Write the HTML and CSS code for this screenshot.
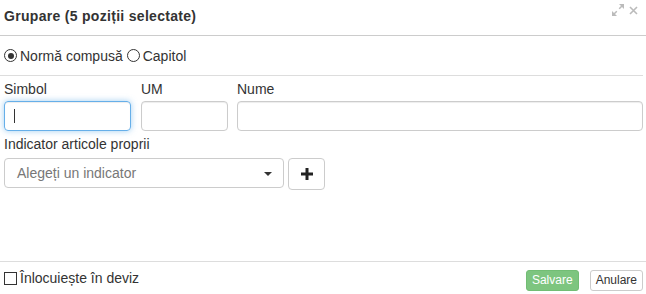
FILE: index.html
```html
<!DOCTYPE html>
<html>
<head>
    <title>Grupare</title>
    <link rel="stylesheet" href="styles.css">
</head>
<body>
    <div class="dialog">
        <div class="dialog-header">
            <span class="dialog-title">Grupare (5 poziții selectate)</span>
            <span class="dialog-tools">
                <svg width="12" height="12" viewBox="0 0 12 12" fill="#bbb" stroke="#bbb" stroke-width="1.5">
                    <path d="M12 0 L7 0 L12 5 Z" stroke="none"/>
                    <path d="M10 2 L7.2 4.8"/>
                    <path d="M0 12 L0 7 L5 12 Z" stroke="none"/>
                    <path d="M2 10 L4.8 7.2"/>
                </svg>
                <svg width="9" height="9" viewBox="0 0 9 9"><path d="M1 1 L8 8 M8 1 L1 8" stroke="#bbb" stroke-width="1.6"/></svg>
            </span>
        </div>

        <div class="dialog-body">
            <div class="type-row">
                <label class="choice"><span class="radio checked"></span>Normă compusă</label>
                <label class="choice"><span class="radio"></span>Capitol</label>
            </div>

            <div class="fields">
                <div class="field field-simbol">
                    <label>Simbol</label>
                    <div class="input focused"><span class="caret"></span></div>
                </div>
                <div class="field field-um">
                    <label>UM</label>
                    <div class="input"></div>
                </div>
                <div class="field field-nume">
                    <label>Nume</label>
                    <div class="input"></div>
                </div>
            </div>

            <div class="field">
                <label>Indicator articole proprii</label>
                <div class="indicator-row">
                    <div class="select">
                        <span>Alegeți un indicator</span>
                        <span class="select-arrow"></span>
                    </div>
                    <button class="btn btn-add">
                        <svg width="12" height="12" viewBox="0 0 12 12"><path d="M0 6 H12 M6 0 V12" stroke="#222" stroke-width="3"/></svg>
                    </button>
                </div>
            </div>
        </div>

        <div class="dialog-footer">
            <label class="choice"><span class="checkbox"></span>Înlocuiește în deviz</label>
            <div class="footer-buttons">
                <button class="btn btn-save">Salvare</button>
                <button class="btn btn-cancel">Anulare</button>
            </div>
        </div>
    </div>
</body>
</html>
```

FILE: styles.css
```css
* { box-sizing: border-box; }
body { margin: 0; font-family: "Liberation Sans", Arial, sans-serif; font-size: 14px; color: #333; background: #fff; }

.dialog { height: 294px; display: flex; flex-direction: column; }

.dialog-header {
    height: 36px;
    padding: 0 4px 3px 4px;
    border-bottom: 1px solid #ccc;
    display: flex;
    align-items: center;
    justify-content: space-between;
}
.dialog-title { font-weight: bold; font-size: 14px; letter-spacing: 0.3px; }
.dialog-tools { display: flex; align-items: center; gap: 5px; align-self: flex-start; margin-top: 4px; margin-right: 4px; }

.dialog-body { padding: 0 3px 0 4px; }

.type-row {
    height: 40px;
    display: flex;
    align-items: center;
    gap: 4px;
    border-bottom: 1px solid #ddd;
    margin: 0 0 0 -4px;
    padding: 0 4px;
}

.choice { display: flex; align-items: center; gap: 3px; }
.radio {
    width: 13px; height: 13px;
    border: 1px solid #333;
    border-radius: 50%;
    display: inline-block;
    position: relative;
}
.radio.checked::after {
    content: "";
    position: absolute;
    left: 2.5px; top: 2.5px;
    width: 6px; height: 6px;
    border-radius: 50%;
    background: #333;
}
.checkbox { width: 13px; height: 13px; border: 1px solid #333; display: inline-block; }

.fields { display: flex; gap: 10px; margin-top: 3px; }
.field label { display: block; height: 20px; line-height: 20px; margin-bottom: 2px; }
.field-simbol { width: 127px; }
.field-um { width: 87px; }
.field-nume { flex: 1; margin-left: -1px; }

.input {
    height: 30px;
    border: 1px solid #ccc;
    border-radius: 4px;
    box-shadow: inset 0 1px 1px rgba(0,0,0,0.075);
    display: flex;
    align-items: center;
    padding-left: 9px;
}
.input.focused {
    border-color: #66afe9;
    box-shadow: inset 0 1px 1px rgba(0,0,0,0.075), 0 0 6px rgba(102,175,233,0.6);
}
.caret { width: 1px; height: 14px; background: #333; }

.fields + .field { margin-top: 3px; }
.indicator-row { display: flex; gap: 4px; margin-top: 4px; }
.select {
    width: 280px;
    height: 30px;
    border: 1px solid #ccc;
    border-radius: 4px;
    display: flex;
    align-items: center;
    justify-content: space-between;
    padding: 0 11px 0 12px;
    color: #777;
}
.select-arrow { border-top: 4px solid #333; border-left: 4px solid transparent; border-right: 4px solid transparent; margin-top: 2px; }

.btn {
    font-family: inherit;
    font-size: 12px;
    border: 1px solid #ccc;
    border-radius: 3px;
    background: #fff;
    color: #333;
    cursor: pointer;
}
.btn-add { width: 37px; height: 32px; display: flex; align-items: center; justify-content: center; border-radius: 4px; }

.dialog-footer {
    margin-top: auto;
    height: 33px;
    border-top: 1px solid #ddd;
    display: flex;
    align-items: center;
    justify-content: space-between;
    padding: 0 3px 0 4px;
}
.footer-buttons { display: flex; gap: 11px; margin-top: 4px; }
.btn-save { background: #7dc57f; border-color: #72bd74; color: #fff; height: 21px; padding: 0 5px; }
.btn-cancel { height: 21px; padding: 0 5px; }
```
